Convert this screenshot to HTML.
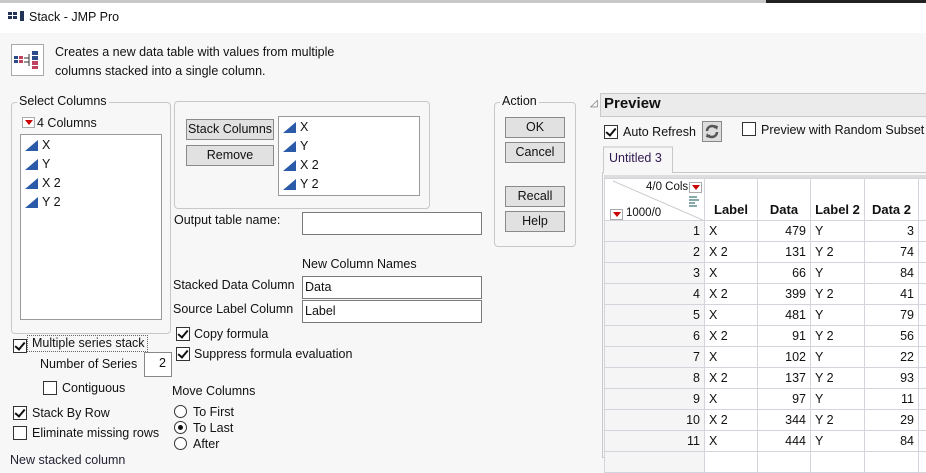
<!DOCTYPE html>
<html><head><meta charset="utf-8"><style>
*{box-sizing:border-box;margin:0;padding:0}
body{width:926px;height:458px;overflow:hidden;background:#f7f7f7;font-family:"Liberation Sans",sans-serif;font-size:12px;color:#111;position:relative}
.a{position:absolute;white-space:nowrap}
.grp{position:absolute;border:1px solid #c8c8c8;border-radius:4px}
.btn{position:absolute;background:#e1e1e1;border:1px solid #8a8a8a;text-align:center;line-height:18px;font-size:12.5px}
.inp{position:absolute;background:#fff;border:1px solid #7a7a7a;padding-left:2px;line-height:20px;font-size:12.5px}
.list{position:absolute;background:#fff;border:1px solid #9a9a9a}
.tri{position:absolute;width:0;height:0;border-left:13px solid transparent;border-bottom:11px solid #2a5aa8}
.cb{position:absolute;width:14px;height:14px;background:#fff;border:1px solid #333}
.cb.c::after{content:"";position:absolute;left:3px;top:0px;width:4px;height:8px;border:solid #111;border-width:0 2px 2px 0;transform:rotate(40deg)}
.rd{position:absolute;width:13px;height:13px;border-radius:50%;background:#fff;border:1px solid #333}
.rd.c::after{content:"";position:absolute;left:3px;top:3px;width:5px;height:5px;border-radius:50%;background:#111}
.dd{position:absolute;width:13px;height:11px;background:#fff;border:1px solid #aaa}
.dd::after{content:"";position:absolute;left:2px;top:2px;border-left:4px solid transparent;border-right:4px solid transparent;border-top:5px solid #c00}
.t{font-size:12.5px}
table{position:absolute;left:604px;top:178px;border-collapse:collapse;font-size:12.5px;table-layout:fixed;width:374px}
td{border:1px solid #d4d4dc;height:21px;padding:0 4px;background:#fff;white-space:nowrap;overflow:hidden}
td.r{text-align:right}
td.h{background:#f5f5f5;text-align:right}
th{border:1px solid #d4d4dc;height:42px;vertical-align:bottom;padding:0 2px 3px;font-size:13px;background:#fff;text-align:center;white-space:nowrap;overflow:hidden}
</style></head><body>
<div class="a" style="left:0;top:0;width:926px;height:3px;background:#c8c8c8"></div>
<div class="a" style="left:766px;top:0;width:160px;height:3px;background:#222"></div>
<div class="a" style="left:0;top:3px;width:926px;height:30px;background:#fff"></div>
<svg class="a" style="left:8px;top:11px" width="16" height="10"><rect x="0" y="1" width="4" height="3" fill="#235"/><rect x="5" y="1" width="4" height="3" fill="#235"/><rect x="0" y="5" width="4" height="3" fill="#235"/><rect x="5" y="5" width="4" height="3" fill="#235"/><rect x="12" y="0" width="4" height="10" fill="#235"/></svg>
<div class="a" style="left:29px;top:10px;font-size:12.5px">Stack - JMP Pro</div>
<div class="a" style="left:11px;top:44px;width:33px;height:32px;background:#fff;border:1px solid #aaa"></div>
<svg class="a" style="left:14px;top:50px" width="27" height="20"><rect x="0" y="6" width="4" height="3" fill="#2a4a8a"/><rect x="5" y="6" width="4" height="3" fill="#c04060"/><rect x="0" y="10" width="4" height="3" fill="#2a4a8a"/><rect x="5" y="10" width="4" height="3" fill="#c04060"/><path d="M10 8h5M10 12h5M15 4v12" stroke="#333"/><rect x="18" y="1" width="6" height="4" fill="#2a4a8a"/><rect x="18" y="6" width="6" height="4" fill="#2a4a8a"/><rect x="18" y="11" width="6" height="4" fill="#c04060"/><rect x="18" y="16" width="6" height="3" fill="#c04060"/></svg>
<div class="a t" style="left:55px;top:43px;line-height:19px">Creates a new data table with values from multiple<br>columns stacked into a single column.</div>

<div class="grp" style="left:11px;top:102px;width:160px;height:232px"></div>
<div class="a t" style="left:17px;top:94px;background:#f7f7f7;padding:0 2px">Select Columns</div>
<div class="dd" style="left:22px;top:117px"></div>
<div class="a t" style="left:37px;top:116px">4 Columns</div>
<div class="list" style="left:20px;top:134px;width:142px;height:186px"></div>
<div class="tri" style="left:25px;top:140px"></div><div class="a t" style="left:42px;top:138px">X</div>
<div class="tri" style="left:25px;top:159px"></div><div class="a t" style="left:42px;top:157px">Y</div>
<div class="tri" style="left:25px;top:178px"></div><div class="a t" style="left:42px;top:176px">X 2</div>
<div class="tri" style="left:25px;top:197px"></div><div class="a t" style="left:42px;top:195px">Y 2</div>

<div class="grp" style="left:174px;top:101px;width:256px;height:108px"></div>
<div class="btn" style="left:186px;top:119px;width:88px;height:21px">Stack Columns</div>
<div class="btn" style="left:186px;top:145px;width:88px;height:21px">Remove</div>
<div class="list" style="left:278px;top:116px;width:142px;height:80px"></div>
<div class="tri" style="left:283px;top:122px"></div><div class="a t" style="left:300px;top:120px">X</div>
<div class="tri" style="left:283px;top:141px"></div><div class="a t" style="left:300px;top:139px">Y</div>
<div class="tri" style="left:283px;top:160px"></div><div class="a t" style="left:300px;top:158px">X 2</div>
<div class="tri" style="left:283px;top:179px"></div><div class="a t" style="left:300px;top:177px">Y 2</div>

<div class="a t" style="left:174px;top:213px">Output table name:</div>
<div class="inp" style="left:302px;top:212px;width:180px;height:23px"></div>
<div class="a t" style="left:302px;top:257px">New Column Names</div>
<div class="a t" style="left:173px;top:278px">Stacked Data Column</div>
<div class="inp" style="left:302px;top:276px;width:180px;height:23px">Data</div>
<div class="a t" style="left:173px;top:302px">Source Label Column</div>
<div class="inp" style="left:302px;top:300px;width:180px;height:23px">Label</div>
<div class="cb c" style="left:176px;top:327px"></div><div class="a t" style="left:194px;top:327px">Copy formula</div>
<div class="cb c" style="left:176px;top:347px"></div><div class="a t" style="left:194px;top:347px">Suppress formula evaluation</div>

<div class="cb c" style="left:13px;top:339px"></div>
<div class="a t" style="left:27px;top:335px;border:1px dotted #666;padding:0 2px 1px 4px">Multiple series stack</div>
<div class="a t" style="left:40px;top:357px">Number of Series</div>
<div class="inp" style="left:144px;top:352px;width:28px;height:25px;text-align:right;padding-right:5px;border-color:#888">2</div>
<div class="cb" style="left:43px;top:381px"></div><div class="a t" style="left:62px;top:381px">Contiguous</div>
<div class="a t" style="left:172px;top:384px">Move Columns</div>
<div class="rd" style="left:174px;top:405px"></div><div class="a t" style="left:193px;top:405px">To First</div>
<div class="rd c" style="left:174px;top:421px"></div><div class="a t" style="left:193px;top:421px">To Last</div>
<div class="rd" style="left:174px;top:437px"></div><div class="a t" style="left:193px;top:437px">After</div>
<div class="cb c" style="left:13px;top:406px"></div><div class="a t" style="left:32px;top:406px">Stack By Row</div>
<div class="cb" style="left:13px;top:426px"></div><div class="a t" style="left:32px;top:426px">Eliminate missing rows</div>
<div class="a t" style="left:10px;top:453px;color:#223">New stacked column</div>

<div class="grp" style="left:494px;top:102px;width:82px;height:145px"></div>
<div class="a t" style="left:500px;top:94px;background:#f7f7f7;padding:0 2px">Action</div>
<div class="btn" style="left:505px;top:117px;width:60px;height:21px">OK</div>
<div class="btn" style="left:505px;top:142px;width:60px;height:21px">Cancel</div>
<div class="btn" style="left:505px;top:186px;width:60px;height:21px">Recall</div>
<div class="btn" style="left:505px;top:211px;width:60px;height:21px">Help</div>

<div class="a" style="left:590px;top:98px;font-size:10px;color:#666">◿</div>
<div class="a" style="left:600px;top:93px;width:326px;height:24px;background:#ebebeb;border:1px solid #c8c8c8;border-right:none"></div>
<div class="a" style="left:604px;top:95px;font-size:15px;font-weight:bold">Preview</div>
<div class="cb c" style="left:604px;top:125px"></div><div class="a t" style="left:623px;top:125px">Auto Refresh</div>
<div class="a" style="left:702px;top:121px;width:20px;height:21px;background:#ddd;border:1px solid #888"></div>
<svg class="a" style="left:705px;top:124px" width="14" height="15"><path d="M2 7a5 5 0 0 1 9-3M12 8a5 5 0 0 1-9 3" stroke="#555" stroke-width="2.5" fill="none"/><path d="M9 1l4 1-1 4z M5 14l-4-1 1-4z" fill="#555"/></svg>
<div class="cb" style="left:742px;top:122px"></div><div class="a t" style="left:761px;top:123px">Preview with Random Subset</div>
<div class="a" style="left:602px;top:172px;width:324px;height:286px;border:1px solid #c8c8c8;border-right:none;background:#f7f7f7"></div>
<div class="a" style="left:603px;top:146px;width:70px;height:27px;background:#f7f7f7;border:1px solid #c8c8c8;border-bottom:none;border-top:2px solid #ddd"></div>
<div class="a t" style="left:609px;top:151px;color:#301850">Untitled 3</div>
<div class="a" style="left:604px;top:175px;width:322px;height:3px;background:#ddd"></div>
<table>
<colgroup><col style="width:100px"><col style="width:53px"><col style="width:53px"><col style="width:54px"><col style="width:54px"><col style="width:60px"></colgroup>
<tr><th style="position:relative;padding:0"><svg style="position:absolute;left:0;top:0" width="100" height="42"><line x1="8" y1="2" x2="100" y2="42" stroke="#ccc"/><path d="M84 18h8M84 21h10M84 24h6M84 27h8" stroke="#8aa" stroke-width="2"/></svg><span style="position:absolute;left:41px;top:2px;font-weight:normal;font-size:11.5px">4/0 Cols</span><span class="dd" style="left:84px;top:3px"></span><span class="dd" style="left:5px;top:30px"></span><span style="position:absolute;left:21px;top:28px;font-weight:normal;font-size:11.5px">1000/0</span></th>
<th>Label</th><th>Data</th><th>Label 2</th><th>Data 2</th><th></th></tr>
<tr><td class="h">1</td><td>X</td><td class="r">479</td><td>Y</td><td class="r">3</td><td></td></tr>
<tr><td class="h">2</td><td>X 2</td><td class="r">131</td><td>Y 2</td><td class="r">74</td><td></td></tr>
<tr><td class="h">3</td><td>X</td><td class="r">66</td><td>Y</td><td class="r">84</td><td></td></tr>
<tr><td class="h">4</td><td>X 2</td><td class="r">399</td><td>Y 2</td><td class="r">41</td><td></td></tr>
<tr><td class="h">5</td><td>X</td><td class="r">481</td><td>Y</td><td class="r">79</td><td></td></tr>
<tr><td class="h">6</td><td>X 2</td><td class="r">91</td><td>Y 2</td><td class="r">56</td><td></td></tr>
<tr><td class="h">7</td><td>X</td><td class="r">102</td><td>Y</td><td class="r">22</td><td></td></tr>
<tr><td class="h">8</td><td>X 2</td><td class="r">137</td><td>Y 2</td><td class="r">93</td><td></td></tr>
<tr><td class="h">9</td><td>X</td><td class="r">97</td><td>Y</td><td class="r">11</td><td></td></tr>
<tr><td class="h">10</td><td>X 2</td><td class="r">344</td><td>Y 2</td><td class="r">29</td><td></td></tr>
<tr><td class="h">11</td><td>X</td><td class="r">444</td><td>Y</td><td class="r">84</td><td></td></tr>
<tr><td class="h"></td><td></td><td></td><td></td><td></td><td></td></tr>
</table>
</body></html>
